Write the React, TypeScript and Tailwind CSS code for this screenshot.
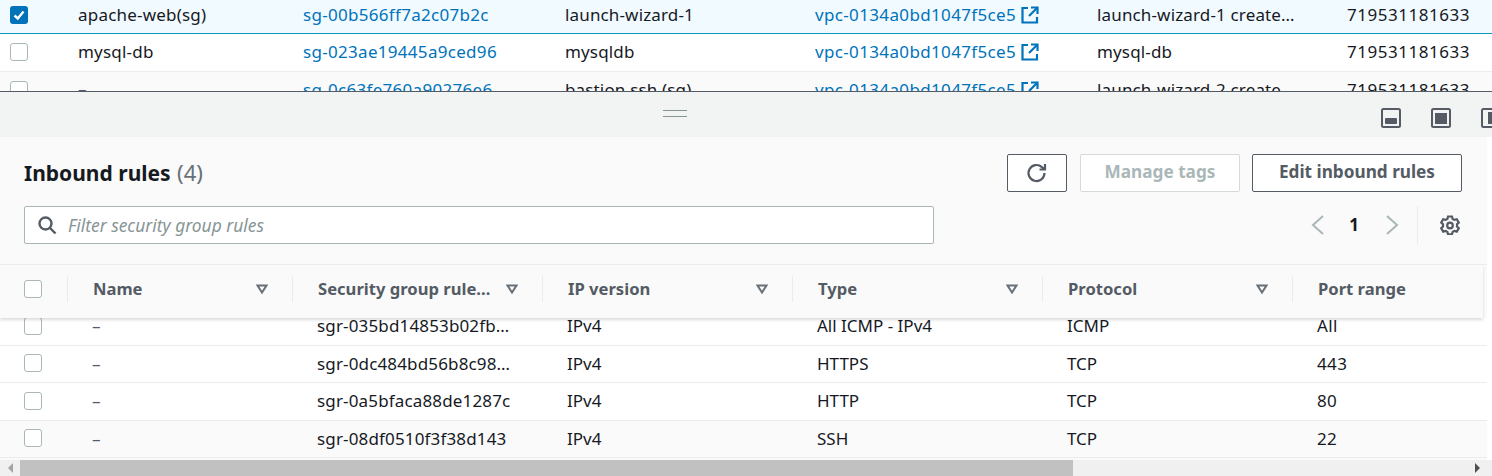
import React from "react";

const F = "font-['Noto_Sans',sans-serif]";

function Box({ checked, cls = "" }: { checked?: boolean; cls?: string }) {
  if (checked)
    return (
      <div className={`w-[18px] h-[18px] rounded-[3px] bg-[#0073bb] flex items-center justify-center ${cls}`}>
        <svg width="14" height="14" viewBox="0 0 14 14" fill="none">
          <path d="M2.5 7.5 L5.8 10.5 L11.5 3.5" stroke="#fff" strokeWidth="2.4" />
        </svg>
      </div>
    );
  return <div className={`w-[18px] h-[18px] rounded-[3px] border border-[#aab7b8] bg-white ${cls}`} />;
}

function Ext() {
  return (
    <svg width="18" height="18" viewBox="0 0 18 18" fill="none" stroke="#0073bb" strokeWidth="2.2" className="shrink-0">
      <path d="M7 2H1.5V16.5H16V11" />
      <path d="M10 1.5H16.5V8" />
      <path d="M16 2L8 10" />
    </svg>
  );
}

function Tri() {
  return (
    <svg width="12" height="10" viewBox="0 0 12 10" fill="none" stroke="#687078" strokeWidth="2" className="shrink-0">
      <path d="M1.5 1.5H10.5L6 8.5Z" />
    </svg>
  );
}

function Pane({ variant }: { variant: 0 | 1 | 2 }) {
  return (
    <svg width="20" height="20" viewBox="0 0 20 20" className="shrink-0">
      <rect x="1" y="1" width="18" height="18" rx="1.5" fill="none" stroke="#545b64" strokeWidth="2" />
      {variant === 0 && <rect x="4" y="10" width="12" height="6" rx="1" fill="#545b64" />}
      {variant === 1 && <rect x="4" y="5" width="12" height="11" fill="#545b64" />}
      {variant === 2 && <rect x="7" y="4" width="9" height="12" fill="#545b64" />}
    </svg>
  );
}

const tops = [
  ["apache-web(sg)", "sg-00b566ff7a2c07b2c", "launch-wizard-1", "launch-wizard-1 create…"],
  ["mysql-db", "sg-023ae19445a9ced96", "mysqldb", "mysql-db"],
  ["–", "sg-0c63fe760a90276e6", "bastion.ssh (sg)", "launch-wizard-2 create…"],
];

const heads = [
  ["Name", "w-[225px]", true],
  ["Security group rule…", "w-[250px]", true],
  ["IP version", "w-[250px]", true],
  ["Type", "w-[250px]", true],
  ["Protocol", "w-[250px]", true],
  ["Port range", "w-[170px]", false],
] as const;

const rows = [
  ["sgr-035bd14853b02fb…", "IPv4", "All ICMP - IPv4", "ICMP", "All"],
  ["sgr-0dc484bd56b8c98…", "IPv4", "HTTPS", "TCP", "443"],
  ["sgr-0a5bfaca88de1287c", "IPv4", "HTTP", "TCP", "80"],
  ["sgr-08df0510f3f38d143", "IPv4", "SSH", "TCP", "22"],
];

export default function App() {
  return (
    <div className={`${F} relative w-[1492px] h-[476px] overflow-hidden bg-white text-[#16191f] text-[17px] flex flex-col`}>
      {/* upper table */}
      <div className="h-[91px] shrink-0 overflow-hidden">
        {tops.map((r, i) => (
          <div
            key={i}
            className={`flex items-center whitespace-nowrap ${
              i === 0
                ? "h-[34px] bg-[#f1faff] border-b border-[#0a97c4] pb-[3px]"
                : i === 1
                  ? "h-[38px] bg-white border-b border-[#eaeded] pb-[2px]"
                  : "h-[38px] bg-[#fafafa] pb-[2px]"
            }`}
          >
            <div className="w-[78px] pl-[10px] shrink-0">
              <Box checked={i === 0} />
            </div>
            <div className={`w-[225px] shrink-0 tracking-[0.2px] ${i === 2 ? "-mt-[3px] text-[#545b64]" : ""}`}>{r[0]}</div>
            <div className="w-[262px] shrink-0 text-[#0073bb] tracking-[0.3px]">{r[1]}</div>
            <div className="w-[250px] shrink-0 tracking-[0.15px]">{r[2]}</div>
            <div className="w-[282px] shrink-0 flex items-center gap-[5px] text-[#0073bb] tracking-[0.35px]">
              vpc-0134a0bd1047f5ce5 <Ext />
            </div>
            <div className="w-[250px] shrink-0 tracking-[0.15px]">{r[3]}</div>
            <div className="shrink-0 tracking-[0.52px]">719531181633</div>
          </div>
        ))}
      </div>

      {/* split panel bar */}
      <div className="h-[46px] shrink-0 bg-[#f2f3f3] border-t border-[#545b64] relative flex items-start">
        <div className="w-full flex justify-center pr-[142px]">
          <div className="mt-[18px] w-[24px] h-[7px] border-y border-[#879596]" />
        </div>
        <div className="absolute left-[1381px] top-[16px] flex gap-[30px]">
          <Pane variant={0} />
          <Pane variant={1} />
          <Pane variant={2} />
        </div>
      </div>

      {/* lower panel */}
      <div className="flex-1 min-h-0 w-[1487px] bg-[#fafafa] flex flex-col relative">
        <div className="h-[128px] shrink-0 border-b border-[#eaeded] px-[24px] pt-[16px]">
          <div className="flex items-center h-[38px]">
            <h2 className="text-[21px] font-bold leading-[38px] text-[#16191f]">
              Inbound rules <span className="font-normal text-[#687078] text-[22px] ml-[1px]">(4)</span>
            </h2>
            <div className="ml-auto flex gap-[13px] pr-[1px] mt-[2px]">
              <button className="w-[60px] h-[38px] bg-white border border-[#545b64] rounded-[2px] flex items-center justify-center">
                <svg width="22" height="22" viewBox="0 0 22 22" fill="none" stroke="#545b64" strokeWidth="2.2">
                  <path d="M18.5 11a8 8 0 1 1-2.6-5.9L18 7" />
                  <path d="M19 2v5.5h-5.5" />
                </svg>
              </button>
              <button className="w-[160px] h-[38px] bg-white border border-[#d5dbdb] rounded-[2px] text-[#aab7b8] font-bold text-[17.2px] pb-[2px]">
                Manage tags
              </button>
              <button className="w-[210px] h-[38px] bg-white border border-[#545b64] rounded-[2px] text-[#545b64] font-bold text-[17.2px] -ml-[1px] pb-[2px]">
                Edit inbound rules
              </button>
            </div>
          </div>
          <div className="flex items-center mt-[15px]">
            <div className="w-[910px] h-[38px] bg-white border border-[#aab7b8] rounded-[2px] flex items-center pl-[12px]">
              <svg width="20" height="20" viewBox="0 0 20 20" fill="none" stroke="#545b64" strokeWidth="2.4" className="shrink-0">
                <circle cx="8.5" cy="8.5" r="6" />
                <path d="M13 13l5.5 5.5" />
              </svg>
              <span className="ml-[11px] italic text-[#879596] text-[17.4px]">Filter security group rules</span>
            </div>
            <div className="ml-auto flex items-center h-[38px]">
              <svg width="16" height="22" viewBox="0 0 16 22" fill="none" stroke="#aab7b8" strokeWidth="2">
                <path d="M13 2L3 11l10 9" />
              </svg>
              <span className="ml-[23px] mr-[25px] font-bold text-[#16191f]">1</span>
              <svg width="16" height="22" viewBox="0 0 16 22" fill="none" stroke="#aab7b8" strokeWidth="2">
                <path d="M3 2l10 9-10 9" />
              </svg>
              <div className="w-px h-[38px] bg-[#eaeded] ml-[17px] mr-[22px]" />
              <svg width="20" height="20" viewBox="0 0 20 20" fill="none" stroke="#545b64" strokeWidth="2.2" className="mr-[3px]">
                <path d="M8 1.5h4l.6 2.4 1.8 1 2.4-.7 2 3.4-1.8 1.7v2.2l1.8 1.7-2 3.4-2.4-.7-1.8 1-.6 2.4H8l-.6-2.4-1.8-1-2.4.7-2-3.4 1.8-1.7V9.3L1.2 7.6l2-3.4 2.4.7 1.8-1z" />
                <circle cx="10" cy="10.5" r="2.8" />
              </svg>
            </div>
          </div>
        </div>

        <div className="h-[53px] w-[1483px] shrink-0 flex items-center pb-[5px] bg-[#fafafa] shadow-[0_2px_3px_rgba(0,0,0,0.14)] relative z-10 text-[#545b64] font-bold text-[16.6px]">
          <div className="w-[68px] pl-[24px] shrink-0 border-r border-[#eaeded] h-[26px] flex items-center">
            <Box />
          </div>
          {heads.map(([h, w, f], i) => (
            <div
              key={i}
              className={`${w} shrink-0 h-[26px] pl-[25px] pr-[24px] flex items-center justify-between whitespace-nowrap ${
                i < 5 ? "border-r border-[#eaeded]" : ""
              }`}
            >
              <span>{h}</span>
              {f && <Tri />}
            </div>
          ))}
        </div>

        <div className="flex-1 min-h-0 overflow-hidden">
          {rows.map((r, i) => (
            <div
              key={i}
              className={`h-[37.5px] flex items-center pb-[1px] whitespace-nowrap border-b border-[#eaeded] ${
                i === 0 ? "-mt-[10px]" : ""
              } ${i === 3 ? "bg-[#fafafa]" : "bg-white"}`}
            >
              <div className="w-[92px] pl-[24px] shrink-0">
                <Box />
              </div>
              <div className="w-[225px] shrink-0 text-[#545b64]">–</div>
              <div className="w-[250px] shrink-0 tracking-[0.15px]">{r[0]}</div>
              <div className="w-[250px] shrink-0">{r[1]}</div>
              <div className="w-[250px] shrink-0">{r[2]}</div>
              <div className="w-[250px] shrink-0">{r[3]}</div>
              <div className="shrink-0 tracking-[0.4px]">{r[4]}</div>
            </div>
          ))}
        </div>
      </div>

      {/* page scrollbar */}
      <div className="absolute left-0 top-[460px] w-[1492px] h-[16px] bg-[#f0f0f0] flex items-center">
        <div className="w-[20px] flex justify-center">
          <div className="w-0 h-0 border-y-[5px] border-y-transparent border-r-[5px] border-r-[#a3a3a3]" />
        </div>
        <div className="w-[1053px] h-[16px] bg-[#c1c1c1]" />
        <div className="ml-auto w-[20px] pr-[10px] flex justify-center">
          <div className="w-0 h-0 border-y-[5px] border-y-transparent border-l-[5px] border-l-[#505050]" />
        </div>
      </div>
    </div>
  );
}
